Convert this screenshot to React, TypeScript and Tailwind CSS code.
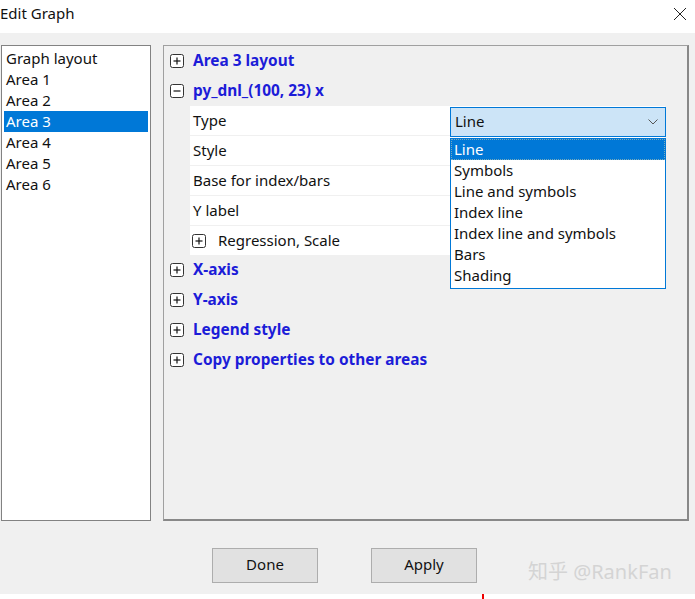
import { useState } from "react";

const areas = ["Graph layout", "Area 1", "Area 2", "Area 3", "Area 4", "Area 5", "Area 6"];
const types = ["Line", "Symbols", "Line and symbols", "Index line", "Index line and symbols", "Bars", "Shading"];
const props = ["Type", "Style", "Base for index/bars", "Y label"];

function Box({ open }: { open?: boolean }) {
  return (
    <svg width="14" height="14" viewBox="0 0 14 14" className="shrink-0">
      <rect x="0.5" y="0.5" width="13" height="13" rx="2" fill="#fff" stroke="#333" />
      <path d="M3.5 7h7" stroke="#111" strokeWidth="1.2" />
      {!open && <path d="M7 3.5v7" stroke="#111" strokeWidth="1.2" />}
    </svg>
  );
}

function Heading({ label, open }: { label: string; open?: boolean }) {
  return (
    <div className="h-[30px] flex items-center gap-[9px] pl-[6px]">
      <Box open={open} />
      <span className="text-[15.4px] font-bold text-[#1c1cd8]">{label}</span>
    </div>
  );
}

export default function App() {
  const [selected, setSelected] = useState(3);
  const [type, setType] = useState("Line");

  return (
    <div
      className="w-[695px] h-[599px] bg-[#f0f0f0] flex flex-col text-[#111] text-[15px] overflow-hidden"
      style={{ fontFamily: '"Noto Sans", "Noto Sans CJK SC", sans-serif' }}
    >
      <div className="h-[33px] bg-white flex items-center justify-between">
        <span className="text-[15px] -mt-[7px]">Edit Graph</span>
        <svg width="14" height="14" viewBox="0 0 14 14" className="mr-[8px] -mt-[5px]">
          <path d="M1 1l12 12M13 1L1 13" stroke="#222" strokeWidth="1" />
        </svg>
      </div>

      <div className="flex gap-[12px] pt-[12px] pl-[1px]">
        <div className="w-[150px] h-[476px] bg-white border border-[#828282] py-[2px] px-[2px]">
          {areas.map((a, i) => (
            <div
              key={a}
              onClick={() => setSelected(i)}
              className={`h-[21px] leading-[21px] px-[2px] cursor-default ${
                i === selected ? "bg-[#0078d7] text-white" : ""
              }`}
            >
              {a}
            </div>
          ))}
        </div>

        <div className="relative w-[526px] h-[476px] border border-[#a0a0a0] border-r-[#888] border-b-[#888] border-r-2 border-b-2">
          <Heading label="Area 3 layout" />
          <Heading label="py_dnl_(100, 23) x" open />
          <div className="ml-[26px] mr-[22px] flex flex-col gap-[1px]">
            {props.map((p) => (
              <div key={p} className="h-[29px] bg-white flex">
                <div className="w-[260px] pl-[3px] flex items-center">{p}</div>
                <div className="flex-1" />
              </div>
            ))}
            <div className="h-[29px] bg-white flex items-center gap-[12px] pl-[2px]">
              <Box />
              <span>Regression, Scale</span>
            </div>
          </div>
          <Heading label="X-axis" />
          <Heading label="Y-axis" />
          <Heading label="Legend style" />
          <Heading label="Copy properties to other areas" />

          <div className="absolute left-[286px] top-[61px] w-[216px]">
            <div className="h-[30px] bg-[#cce4f7] border border-[#0078d7] flex items-center justify-between pl-[4px] pr-[6px]">
              <span className="-mt-[2px]">{type}</span>
              <svg width="12" height="8" viewBox="0 0 12 8">
                <path d="M1.5 1.5l4.5 4.5 4.5-4.5" fill="none" stroke="#555" strokeWidth="1" />
              </svg>
            </div>
            <div className="mt-[1px] bg-white border border-[#0078d7] pb-[2px]">
              {types.map((t) => (
                <div
                  key={t}
                  onClick={() => setType(t)}
                  className={`h-[21px] leading-[18px] px-[2px] ${
                    t === type ? "bg-[#0078d7] text-white border border-dotted border-[#7ab]" : "border border-transparent"
                  }`}
                >
                  {t}
                </div>
              ))}
            </div>
          </div>
        </div>
      </div>

      <div className="relative flex-1 flex gap-[53px] pl-[212px] pt-[27px]">
        <button className="w-[106px] h-[35px] bg-[#e1e1e1] border border-[#adadad] pb-[2px]">Done</button>
        <button className="w-[106px] h-[35px] bg-[#e1e1e1] border border-[#adadad] pb-[2px]">Apply</button>
        <span className="absolute left-[528px] top-[36px] text-[20px] text-[#d4d4d4]">知乎 @RankFan</span>
      </div>
      <div className="h-[5px] bg-white relative">
        <div className="absolute left-[482px] top-0 w-[2px] h-[5px] bg-[#e00]" />
      </div>
    </div>
  );
}
